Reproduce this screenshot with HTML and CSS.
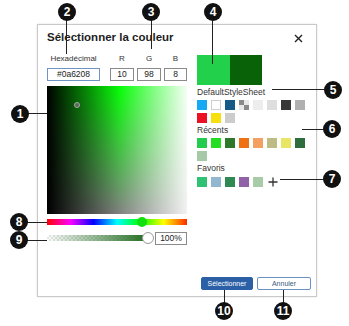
FILE: index.html
```html
<!DOCTYPE html>
<html lang="fr">
<head>
<meta charset="utf-8">
<title>Sélectionner la couleur</title>
<link rel="stylesheet" href="styles.css">
</head>
<body>
<div class="stage">
  <div class="dialog">
    <div class="header">
      <h1 class="title">Sélectionner la couleur</h1>
      <button class="close" aria-label="Fermer">
        <svg width="9" height="9" viewBox="0 0 9 9"><path d="M1 1L8 8M8 1L1 8" stroke="#222" stroke-width="1.4" fill="none"/></svg>
      </button>
    </div>
    <div class="body">
      <div class="left">
        <div class="fields">
          <div class="field hex"><span class="label">Hexadécimal</span><div class="input focus">#0a6208</div></div>
          <div class="field"><span class="label">R</span><div class="input">10</div></div>
          <div class="field"><span class="label">G</span><div class="input">98</div></div>
          <div class="field narrow"><span class="label">B</span><div class="input">8</div></div>
        </div>
        <div class="plane"><div class="plane-sat"></div><span class="plane-marker"></span></div>
        <div class="hue"><span class="hue-thumb"></span></div>
        <div class="alpha-row">
          <div class="alpha"><span class="alpha-thumb"></span></div>
          <div class="input pct">100%</div>
        </div>
      </div>
      <div class="right">
        <div class="preview"><span class="new"></span><span class="old"></span></div>
        <div class="group-label">DefaultStyleSheet</div>
        <div class="swatches">
          <span class="sw" style="background:#16a8f2"></span>
          <span class="sw white"></span>
          <span class="sw" style="background:#165a88"></span>
          <span class="sw checker"></span>
          <span class="sw" style="background:#ededed"></span>
          <span class="sw" style="background:#dedede"></span>
          <span class="sw" style="background:#383838"></span>
          <span class="sw" style="background:#b0b0b0"></span>
          <span class="sw" style="background:#ec1024"></span>
          <span class="sw" style="background:#f6e010"></span>
          <span class="sw" style="background:#cccccc"></span>
        </div>
        <div class="group-label">Récents</div>
        <div class="swatches">
          <span class="sw" style="background:#22cc4c"></span>
          <span class="sw" style="background:#22dd22"></span>
          <span class="sw" style="background:#2e782c"></span>
          <span class="sw" style="background:#f07014"></span>
          <span class="sw" style="background:#f4a062"></span>
          <span class="sw" style="background:#bcbc84"></span>
          <span class="sw" style="background:#e8e664"></span>
          <span class="sw" style="background:#2e6e3e"></span>
          <span class="sw" style="background:#a6caa8"></span>
        </div>
        <div class="group-label">Favoris</div>
        <div class="swatches fav">
          <span class="sw" style="background:#30c274"></span>
          <span class="sw" style="background:#92b8d0"></span>
          <span class="sw" style="background:#2e8a52"></span>
          <span class="sw" style="background:#9262a8"></span>
          <span class="sw" style="background:#a8cca8"></span>
          <span class="plus" aria-label="Ajouter"><svg width="10" height="10" viewBox="0 0 10 10"><path d="M5 0.5V9.5M0.5 5H9.5" stroke="#333" stroke-width="1.3" fill="none"/></svg></span>
        </div>
      </div>
    </div>
    <div class="footer">
      <button class="btn primary">Sélectionner</button>
      <button class="btn secondary">Annuler</button>
    </div>
  </div>

  <div class="callout c1">1</div><span class="lead h l1"></span>
  <div class="callout c2">2</div><span class="lead v l2"></span>
  <div class="callout c3">3</div><span class="lead v l3"></span>
  <div class="callout c4">4</div><span class="lead v l4"></span>
  <div class="callout c5">5</div><span class="lead h l5"></span>
  <div class="callout c6">6</div><span class="lead h l6"></span>
  <div class="callout c7">7</div><span class="lead h l7"></span>
  <div class="callout c8">8</div><span class="lead h l8"></span>
  <div class="callout c9">9</div><span class="lead h l9"></span>
  <div class="callout c10">10</div><span class="lead v l10"></span>
  <div class="callout c11">11</div><span class="lead v l11"></span>
</div>
</body>
</html>
```

FILE: styles.css
```css
* { box-sizing: border-box; }
html, body { margin: 0; padding: 0; background: #fff; }
body { font-family: "Liberation Sans", Arial, sans-serif; color: #333; }

.stage { position: relative; width: 349px; height: 326px; padding: 24px 0 0 37px; }

.dialog {
  width: 280px; height: 273px;
  border: 1px solid #c9c9c9;
  box-shadow: 0 0 2px rgba(0,0,0,0.12);
  background: #fff;
  display: flex; flex-direction: column;
  padding: 5px 5px 6px 9px;
}

.header { display: flex; align-items: center; justify-content: space-between; height: 14px; }
.title { margin: 0; font-size: 11.5px; font-weight: bold; color: #1e1e1e; line-height: 14px; }
.close { border: 0; background: none; padding: 0; width: 9px; height: 9px; margin-right: 8px; margin-top: 2px; display: flex; }

.body { display: flex; gap: 10px; margin-top: 10px; flex: 1; }

.left { width: 140px; display: flex; flex-direction: column; }
.fields { display: flex; gap: 3px; }
.field { display: flex; flex-direction: column; align-items: center; width: 24px; }
.field.hex { width: 53px; margin-right: 7px; }
.field.narrow { width: 23px; }
.label { font-size: 8px; line-height: 10px; height: 10px; color: #333; }
.input {
  margin-top: 4px; width: 100%; height: 13px;
  border: 1px solid #8a8a8a;
  font-size: 8.5px; line-height: 11px; text-align: center; color: #222;
}
.input.focus { border-color: #6e94c6; }

.plane {
  position: relative; margin-top: 5px; width: 140px; height: 128px;
  background: linear-gradient(to right, #000 0%, #7d7d7d 50%, #f2f2f2 100%);
}
.plane-sat {
  position: absolute; inset: 0;
  background: linear-gradient(to right, #000 0%, #06ff06 52%, #f4fff4 100%);
  -webkit-mask-image: linear-gradient(to bottom, #000 0%, rgba(0,0,0,0) 100%);
  mask-image: linear-gradient(to bottom, #000 0%, rgba(0,0,0,0) 100%);
}
.plane-marker {
  position: absolute; left: 27px; top: 16px; width: 6px; height: 6px;
  border-radius: 50%; border: 1px solid #a8a8a8; background: #5a6a5a;
}

.hue {
  position: relative; margin-top: 5px; height: 6px;
  background: linear-gradient(to right, #ff0000 0%, #ff00ff 16.6%, #0000ff 33.3%, #00ffff 50%, #00ff00 66.6%, #ffff00 83.3%, #ff2a00 100%);
}
.hue-thumb {
  position: absolute; left: 90px; top: -2px; width: 10px; height: 10px;
  border-radius: 50%; background: #10e010;
}

.alpha-row { display: flex; align-items: center; gap: 6px; margin-top: 7px; height: 12px; }
.alpha {
  position: relative; flex: 1; height: 6px;
  background:
    linear-gradient(to right, rgba(31,107,31,0) 0%, rgba(31,107,31,1) 100%),
    repeating-conic-gradient(#e6e6e6 0 25%, #ffffff 0 50%) 0 0 / 4px 4px;
}
.alpha-thumb {
  position: absolute; right: -5px; top: -3px; width: 12px; height: 12px;
  border-radius: 50%; background: #fff; border: 1px solid #9a9a9a;
}
.input.pct { margin-top: 0; width: 32px; height: 13px; flex: none; }

.right { display: flex; flex-direction: column; width: 115px; padding-top: 1px; }
.preview { display: flex; width: 65px; height: 30px; }
.preview .new { flex: 1; background: #22d04c; }
.preview .old { flex: 1; background: #0a6208; }
.group-label { font-size: 8.5px; line-height: 10px; margin-top: 2px; color: #333; }
.swatches { display: flex; flex-wrap: wrap; column-gap: 4px; row-gap: 3px; width: 112px; margin-top: 3px; }
.sw { width: 10px; height: 10px; display: block; }
.sw.white { background: #fff; border: 1px solid #cfcfcf; }
.sw.checker {
  background:
    linear-gradient(#8a8a8a, #8a8a8a) 0 0 / 5px 5px no-repeat,
    linear-gradient(#8a8a8a, #8a8a8a) 5px 5px / 5px 5px no-repeat,
    #e8e8e8;
}
.swatches.fav { margin-top: 4px; align-items: center; }
.plus { display: flex; width: 10px; height: 10px; margin-left: 1px; }

.footer { display: flex; justify-content: flex-end; gap: 4px; }
.btn {
  font-family: "Liberation Sans", Arial, sans-serif;
  font-size: 7px; height: 13px; padding: 0; border-radius: 2px; line-height: 11px;
}
.btn.primary { width: 52px; background: #2b5fa6; color: #fff; border: 1px solid #2b5fa6; }
.btn.secondary { width: 54px; background: #fff; color: #3a5a80; border: 1px solid #6a90c4; }

/* annotation callouts */
.callout {
  position: absolute; width: 18px; height: 18px; border-radius: 50%;
  background: #111; color: #fff; font-weight: bold; font-size: 12px;
  display: flex; align-items: center; justify-content: center; line-height: 1;
  z-index: 2;
}
.lead { position: absolute; background: #222; z-index: 1; }
.lead.h { height: 1px; }
.lead.v { width: 1px; }

.c1 { left: 11px; top: 105px; }
.l1 { left: 26px; top: 113px; width: 21px; }
.c2 { left: 58px; top: 3px; }
.l2 { left: 66px; top: 18px; height: 36px; }
.c3 { left: 142px; top: 3px; }
.l3 { left: 151px; top: 18px; height: 31px; }
.c4 { left: 204px; top: 3px; }
.l4 { left: 212px; top: 18px; height: 46px; }
.c5 { left: 324px; top: 81px; }
.l5 { left: 272px; top: 89px; width: 54px; }
.c6 { left: 323px; top: 120px; }
.l6 { left: 302px; top: 129px; width: 24px; }
.c7 { left: 323px; top: 170px; }
.l7 { left: 280px; top: 179px; width: 46px; }
.c8 { left: 10px; top: 213px; }
.l8 { left: 26px; top: 222px; width: 21px; }
.c9 { left: 10px; top: 231px; }
.l9 { left: 26px; top: 240px; width: 21px; }
.c10 { left: 215px; top: 302px; }
.l10 { left: 224px; top: 290px; height: 14px; }
.c11 { left: 274px; top: 302px; }
.l11 { left: 283px; top: 290px; height: 14px; }
```
